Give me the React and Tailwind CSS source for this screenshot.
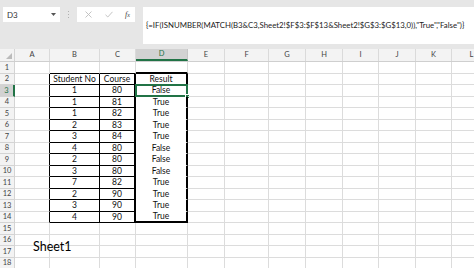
import React from "react";

const cols = [
  { k: "A", w: "w-[35px]" },
  { k: "B", w: "w-[50px]" },
  { k: "C", w: "w-[36px]" },
  { k: "D", w: "w-[52px]" },
  { k: "E", w: "w-[37px]" },
  { k: "F", w: "w-[44px]" },
  { k: "G", w: "w-[37px]" },
  { k: "H", w: "w-[37px]" },
  { k: "I", w: "w-[36px]" },
  { k: "J", w: "w-[37px]" },
  { k: "K", w: "w-[36px]" },
  { k: "L", w: "w-[40px]" },
];

const data = {
  2: ["Student No", "Course", "Result"],
  3: ["1", "80", "False"],
  4: ["1", "81", "True"],
  5: ["1", "82", "True"],
  6: ["2", "83", "True"],
  7: ["3", "84", "True"],
  8: ["4", "80", "False"],
  9: ["2", "80", "False"],
  10: ["3", "80", "False"],
  11: ["7", "82", "True"],
  12: ["2", "90", "True"],
  13: ["3", "90", "True"],
  14: ["4", "90", "True"],
};

function borderFor(r, k) {
  const inTable = r >= 2 && r <= 14;
  if (k === "A" && inTable) return "border-r border-b border-[#dcdcdc] border-r-black";
  if (k === "B" && inTable) return "border-r border-b border-black";
  if (k === "C" && inTable) return "border-r-2 border-b border-black";
  if (k === "D" && inTable && r < 14) return "border-r-2 border-b border-r-black border-b-white";
  if (k === "D" && r === 14) return "border-r-2 border-b-2 border-black";
  if (r === 1 && (k === "B" || k === "C")) return "border-r border-b border-[#dcdcdc] border-b-black";
  if (r === 1 && k === "D") return "border-r border-b-2 border-[#dcdcdc] border-b-black";
  return "border-r border-b border-[#dcdcdc]";
}

function cellText(r, k) {
  const row = data[r];
  if (!row) return "";
  if (k === "B") return row[0];
  if (k === "C") return row[1];
  if (k === "D") return row[2];
  return "";
}

export default function App() {
  const rows = Array.from({ length: 18 }, (_, i) => i + 1);
  return (
    <div
      className="relative w-[474px] h-[268px] overflow-hidden bg-white text-black"
      style={{ fontFamily: "Lato, 'Noto Sans', sans-serif" }}
    >
      {/* toolbar */}
      <div className="h-[49px] bg-[#e6e6e6] flex items-start pt-[7px]">
        <div className="ml-[3px] w-[57px] h-[15px] bg-white flex items-center justify-between pl-[4px] pr-[4px]">
          <span className="text-[8px] text-[#333] leading-none">D3</span>
          <svg width="5" height="3" viewBox="0 0 5 3">
            <path d="M0 0 L5 0 L2.5 3 Z" fill="#555" />
          </svg>
        </div>
        <div className="ml-[7px] w-[3px] h-[15px] flex flex-col items-center justify-center gap-[2px]">
          <div className="w-[1px] h-[1px] bg-[#b0b0b0]" />
          <div className="w-[1px] h-[1px] bg-[#b0b0b0]" />
          <div className="w-[1px] h-[1px] bg-[#b0b0b0]" />
        </div>
        <div className="ml-[7px] w-[58px] h-[15px] bg-white flex items-center">
          <svg className="ml-[8px]" width="7" height="7" viewBox="0 0 7 7">
            <path d="M0.5 0.5 L6.5 6.5 M6.5 0.5 L0.5 6.5" stroke="#bdbdbd" strokeWidth="0.9" />
          </svg>
          <svg className="ml-[13px]" width="8" height="7" viewBox="0 0 8 7">
            <path d="M0.5 3.8 L2.8 6 L7.5 0.8" stroke="#bdbdbd" strokeWidth="0.9" fill="none" />
          </svg>
          <span
            className="ml-[12px] text-[8px] italic text-[#444] leading-none"
            style={{ fontFamily: "'Liberation Serif', serif" }}
          >
            f<span className="text-[6px]">x</span>
          </span>
        </div>
        <div className="ml-[8px] flex-1 h-[37px] bg-white pl-[3px] pt-[3px]">
          <span className="text-[7.8px] text-[#222] leading-none whitespace-nowrap">
            {'{=IF(ISNUMBER(MATCH(B3&C3,Sheet2!$F$3:$F$13&Sheet2!$G$3:$G$13,0)),"True","False")}'}
          </span>
        </div>
      </div>

      {/* column header */}
      <div className="flex h-[13px] bg-[#f3f3f3] border-b border-[#cfcfcf]">
        <div className="w-[15px] shrink-0 border-r border-[#d4d4d4] flex items-end justify-end pr-[2px] pb-[2px]">
          <svg width="6" height="6" viewBox="0 0 6 6">
            <path d="M6 0 L6 6 L0 6 Z" fill="#bbbbbb" />
          </svg>
        </div>
        {cols.map((c) =>
          c.k === "D" ? (
            <div
              key={c.k}
              className={`${c.w} shrink-0 bg-[#d2d2d2] border-r border-b-2 border-[#c6c6c6] border-b-[#217346] flex items-center justify-center text-[7.5px] text-[#217346] leading-none`}
            >
              {c.k}
            </div>
          ) : (
            <div
              key={c.k}
              className={`${c.w} shrink-0 border-r border-[#dadada] flex items-center justify-center text-[7.5px] text-[#444] leading-none`}
            >
              {c.k}
            </div>
          )
        )}
      </div>

      {/* grid rows */}
      {rows.map((r) => (
        <div key={r} className="flex h-[11.5px]">
          {r === 3 ? (
            <div className="w-[15px] shrink-0 bg-[#d2d2d2] border-r-2 border-b border-[#d4d4d4] border-r-[#217346] flex items-center justify-center text-[7.5px] text-[#217346] leading-none">
              {r}
            </div>
          ) : (
            <div className="w-[15px] shrink-0 bg-[#f3f3f3] border-r border-b border-[#d4d4d4] flex items-center justify-center text-[7.5px] text-[#444] leading-none">
              {r}
            </div>
          )}
          {cols.map((c) => (
            <div
              key={c.k}
              className={`${c.w} shrink-0 relative ${borderFor(r, c.k)} flex items-center justify-center text-[8.5px] text-[#111] leading-none`}
            >
              {cellText(r, c.k)}
              {r === 3 && c.k === "D" && (
                <div className="absolute top-[-1px] left-[-1px] right-[-2px] bottom-[-1px] border-2 border-[#217346]">
                  <div className="absolute right-[-4px] bottom-[-4px] w-[5px] h-[5px] bg-[#217346] border border-white" />
                </div>
              )}
            </div>
          ))}
        </div>
      ))}

      <div className="absolute left-[33px] top-[241px] text-[12.5px] leading-none text-black">
        Sheet1
      </div>
    </div>
  );
}
